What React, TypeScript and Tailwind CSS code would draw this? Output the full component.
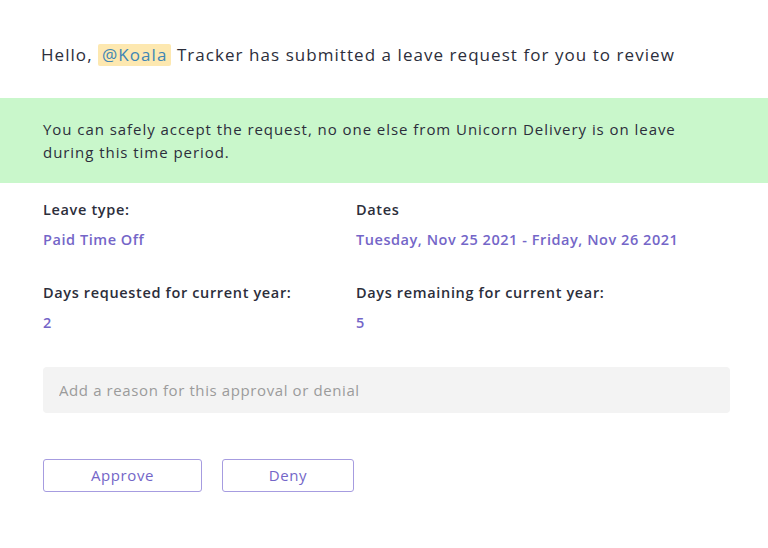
import React from 'react';

const font = { fontFamily: '"Open Sans", "Noto Sans", sans-serif' };

function Field({ label, value }: { label: string; value: string }) {
    return (
        <div>
            <div className="text-[14.5px] leading-[20px] font-semibold tracking-[0.65px] text-[#2c2e3b]">{label}</div>
            <div className="mt-[10px] text-[14.5px] leading-[20px] font-semibold tracking-[0.55px] text-[#7466c8]">{value}</div>
        </div>
    );
}

export default function App() {
    return (
        <div className="w-[768px] h-[548px] bg-white pt-[42px]" style={font}>
            {/* Greeting */}
            <p className="px-[41px] text-[17px] leading-[26px] tracking-[1.05px] text-[#2c2e3b]">
                Hello,{' '}
                <span className="inline-block px-[4px] leading-[22px] rounded-[2px] bg-[#fde8b0] text-[#3f86b5]">@Koala</span>{' '}
                Tracker has submitted a leave request for you to review
            </p>

            {/* Notice */}
            <div className="mt-[30px] bg-[#c9f7cb] px-[43px] pt-[20px] pb-[19px]">
                <p className="text-[15px] leading-[23px] tracking-[0.95px] text-[#2c2e3b]">
                    You can safely accept the request, no one else from Unicorn Delivery is on leave<br />
                    during this time period.
                </p>
            </div>

            {/* Details */}
            <div className="px-[43px] pt-[17px]">
                <div className="grid grid-cols-[313px_1fr] gap-y-[33px]">
                    <Field label="Leave type:" value="Paid Time Off" />
                    <Field label="Dates" value="Tuesday, Nov 25 2021 - Friday, Nov 26 2021" />
                    <Field label="Days requested for current year:" value="2" />
                    <Field label="Days remaining for current year:" value="5" />
                </div>

                <input
                    className="mt-[34px] block w-[687px] h-[46px] rounded-[4px] bg-[#f3f3f3] px-[16px] text-[15px] tracking-[0.6px] text-[#2c2e3b] placeholder:text-[#9b9b9b] outline-none"
                    placeholder="Add a reason for this approval or denial"
                    style={font}
                />

                <div className="mt-[46px] flex gap-[20px]">
                    <button className="w-[159px] h-[33px] rounded-[3px] border border-[#a69ce0] bg-white text-[15px] font-medium tracking-[0.6px] text-[#7466c8]" style={font}>
                        Approve
                    </button>
                    <button className="w-[132px] h-[33px] rounded-[3px] border border-[#a69ce0] bg-white text-[15px] font-medium tracking-[0.6px] text-[#7466c8]" style={font}>
                        Deny
                    </button>
                </div>
            </div>
        </div>
    );
}
